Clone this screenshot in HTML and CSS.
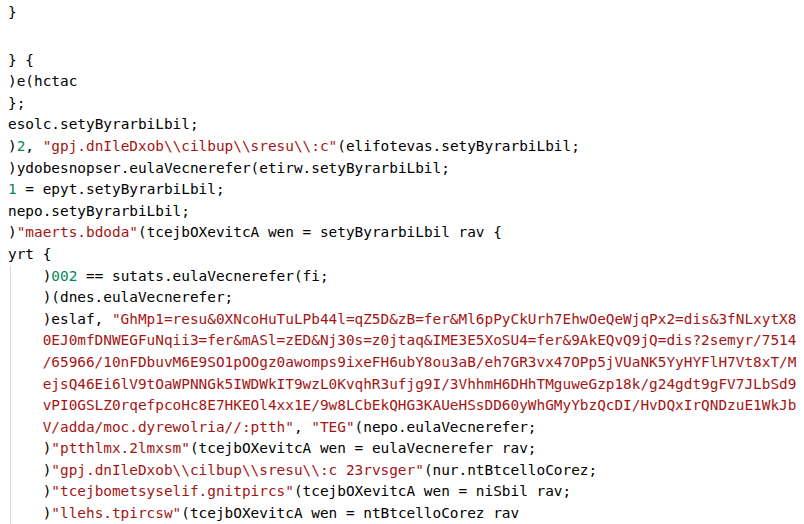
FILE: index.html
```html
<!DOCTYPE html>
<html>
<head>
<meta charset="utf-8">
<link rel="stylesheet" href="styles.css">
</head>
<body>
<div class="code">
<div class="ln">}</div>
<div class="ln gap"> </div>
<div class="ln">} {</div>
<div class="ln">)e(hctac</div>
<div class="ln">};</div>
<div class="ln">esolc.setyByrarbiLbil;</div>
<div class="ln">)<span class="n">2</span>, <span class="s">"gpj.dnIleDxob\\cilbup\\sresu\\:c"</span>(elifotevas.setyByrarbiLbil;</div>
<div class="ln">)ydobesnopser.eulaVecnerefer(etirw.setyByrarbiLbil;</div>
<div class="ln"><span class="n">1</span> = epyt.setyByrarbiLbil;</div>
<div class="ln">nepo.setyByrarbiLbil;</div>
<div class="ln">)<span class="s">"maerts.bdoda"</span>(tcejbOXevitcA wen = setyByrarbiLbil rav {</div>
<div class="ln">yrt {</div>
<div class="block">
<div class="ln">)<span class="n">002</span> == sutats.eulaVecnerefer(fi;</div>
<div class="ln">)(dnes.eulaVecnerefer;</div>
<div class="ln">)eslaf, <span class="s">"GhMp1=resu&amp;0XNcoHuTuLPb44l=qZ5D&amp;zB=fer&amp;Ml6pPyCkUrh7EhwOeQeWjqPx2=dis&amp;3fNLxytX8</span></div>
<div class="ln s">0EJ0mfDNWEGFuNqii3=fer&amp;mASl=zED&amp;Nj30s=z0jtaq&amp;IME3E5XoSU4=fer&amp;9AkEQvQ9jQ=dis?2semyr/7514</div>
<div class="ln s">/65966/10nFDbuvM6E9SO1pOOgz0awomps9ixeFH6ubY8ou3aB/eh7GR3vx47OPp5jVUaNK5YyHYFlH7Vt8xT/M</div>
<div class="ln s">ejsQ46Ei6lV9tOaWPNNGk5IWDWkIT9wzL0KvqhR3ufjg9I/3VhhmH6DHhTMguweGzp18k/g24gdt9gFV7JLbSd9</div>
<div class="ln s">vPI0GSLZ0rqefpcoHc8E7HKEOl4xx1E/9w8LCbEkQHG3KAUeHSsDD60yWhGMyYbzQcDI/HvDQxIrQNDzuE1WkJb</div>
<div class="ln"><span class="s">V/adda/moc.dyrewolria//:ptth"</span>, <span class="s">"TEG"</span>(nepo.eulaVecnerefer;</div>
<div class="ln">)<span class="s">"ptthlmx.2lmxsm"</span>(tcejbOXevitcA wen = eulaVecnerefer rav;</div>
<div class="ln">)<span class="s">"gpj.dnIleDxob\\cilbup\\sresu\\:c 23rvsger"</span>(nur.ntBtcelloCorez;</div>
<div class="ln">)<span class="s">"tcejbometsyselif.gnitpircs"</span>(tcejbOXevitcA wen = niSbil rav;</div>
<div class="ln">)<span class="s">"llehs.tpircsw"</span>(tcejbOXevitcA wen = ntBtcelloCorez rav</div>
</div>
</div>
</body>
</html>
```
FILE: styles.css
```css
html, body {
  margin: 0;
  padding: 0;
  background: #ffffff;
}
.code {
  font-family: "DejaVu Sans Mono", monospace;
  font-size: 14.4px;
  line-height: 21.6px;
  color: #000000;
  padding: 2px 0 0 8px;
}
.ln {
  white-space: pre;
  height: 21.6px;
}
.ln.gap {
  height: 26px;
}
.block {
  margin-left: 2px;
  border-left: 1px solid #d9d9d9;
  padding-left: calc(4ch - 3px);
}
.s { color: #a31515; }
.n { color: #098658; }
```
